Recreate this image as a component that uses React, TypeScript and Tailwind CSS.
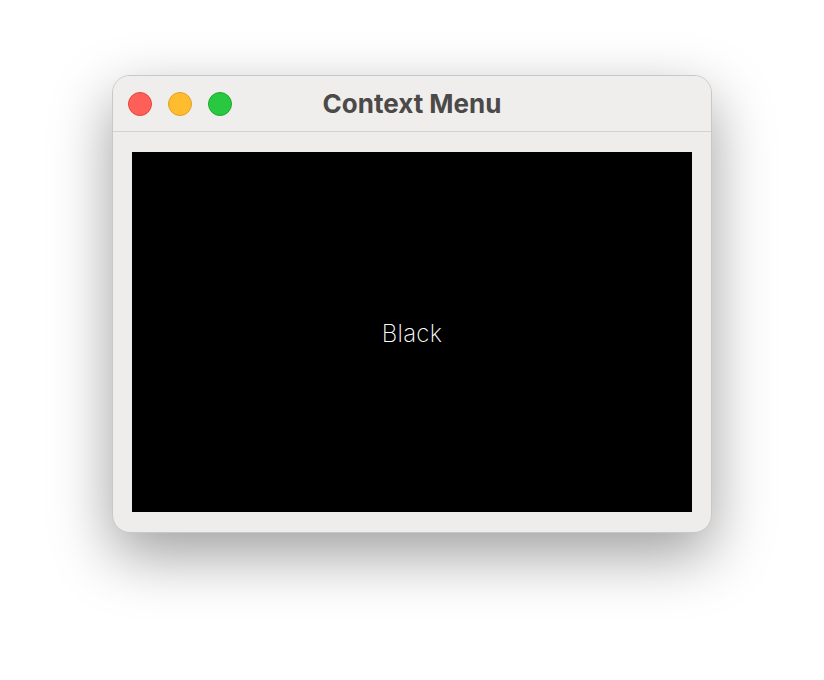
export default function App() {
  return (
    <div className="min-h-[680px] w-full bg-white flex justify-center pt-[75px]" style={{ fontFamily: "Inter, 'Noto Sans', sans-serif" }}>
      <div className="w-[600px] h-[458px] rounded-[18px] bg-[#eeedeb] overflow-hidden border border-[#c9c8c6] shadow-[0_22px_60px_rgba(0,0,0,0.38)] flex flex-col">
        <div className="relative h-[56px] shrink-0 bg-[#efeeec] border-b border-[#d3d2d0] flex items-center justify-center">
          <div className="absolute left-[15px] top-1/2 -translate-y-1/2 flex gap-[16px]">
            <span className="w-[24px] h-[24px] rounded-full bg-[#fe5f57] border border-[#e1463f]" />
            <span className="w-[24px] h-[24px] rounded-full bg-[#febc2e] border border-[#dfa023]" />
            <span className="w-[24px] h-[24px] rounded-full bg-[#28c840] border border-[#1aab29]" />
          </div>
          <h1 className="text-[26px] font-bold text-[#4b4a49] tracking-[0px]">Context Menu</h1>
        </div>
        <div className="flex-1 p-[19px] pt-[20px]">
          <div className="w-[560px] h-[360px] bg-black flex items-center justify-center">
            <span className="text-white text-[24px] font-extralight pt-[3px] tracking-[0.3px]">Black</span>
          </div>
        </div>
      </div>
    </div>
  );
}
